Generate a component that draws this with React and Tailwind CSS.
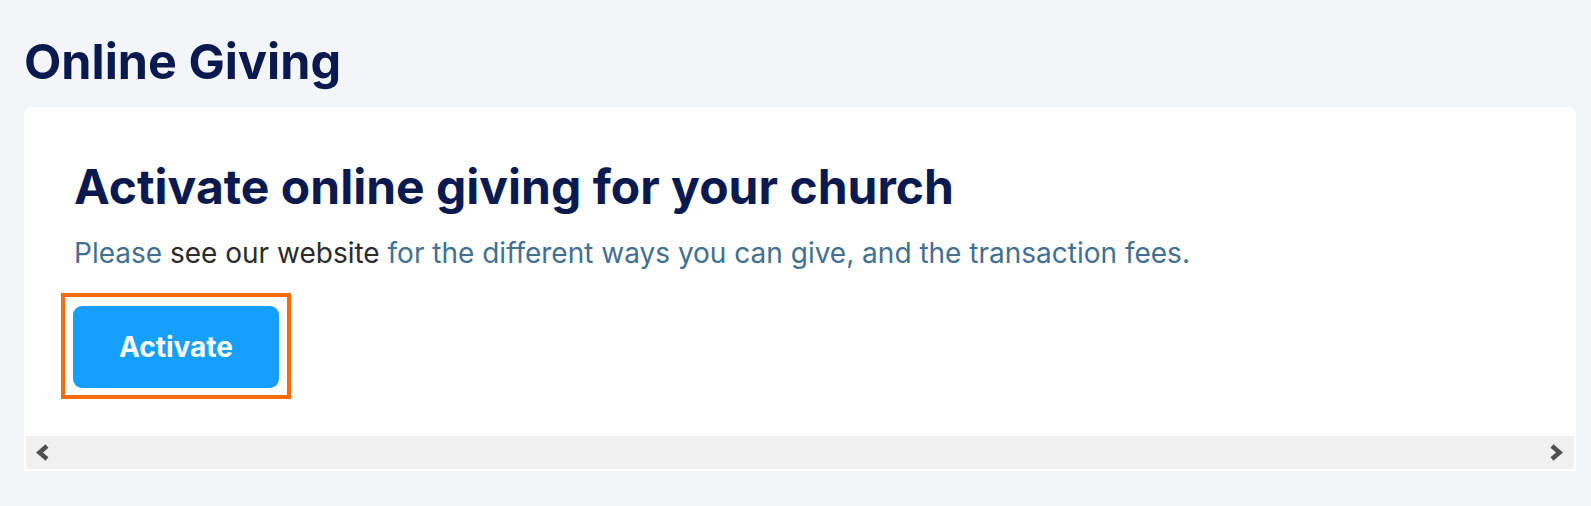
export default function App() {
  return (
    <div className="min-h-[506px] bg-[#f3f6f9] pl-6 pt-[32px]" style={{ fontFamily: "Inter, 'Noto Sans', sans-serif" }}>
      <h1 className="text-[48.5px] leading-[60px] font-bold text-[#0a1a4f]">Online Giving</h1>
      <div className="mt-[15px] w-[1552px] bg-white rounded-t-lg flex flex-col">
        <div className="pl-[50px] pt-[51px] pb-[37px]">
          <h2 className="text-[48px] leading-[58px] font-bold text-[#0a1a4f]">Activate online giving for your church</h2>
          <p className="mt-[19px] text-[28px] leading-[36px] text-[#44708f]">
            Please <span className="text-[#2b2b2b]">see our website</span> for the different ways you can give, and the transaction fees.
          </p>
          <div className="mt-[22px] ml-[-13px] inline-flex border-4 border-[#f96b0c] px-[8px] pt-[9px] pb-[7px]">
            <button className="w-[206px] h-[82px] rounded-[9px] bg-[#14a0fc] text-white text-[28px] font-bold">Activate</button>
          </div>
        </div>
        <div className="mx-[2px] mb-[2px] h-[33px] bg-[#f0f0f0] flex items-center justify-between pl-[8px] pr-[9px]">
          <svg width="16" height="17" viewBox="0 0 16 17"><path d="M13 2 L5.5 8.5 L13 15" fill="none" stroke="#505050" strokeWidth="4.5" /></svg>
          <svg width="16" height="17" viewBox="0 0 16 17"><path d="M3 2 L10.5 8.5 L3 15" fill="none" stroke="#505050" strokeWidth="4.5" /></svg>
        </div>
      </div>
    </div>
  );
}
